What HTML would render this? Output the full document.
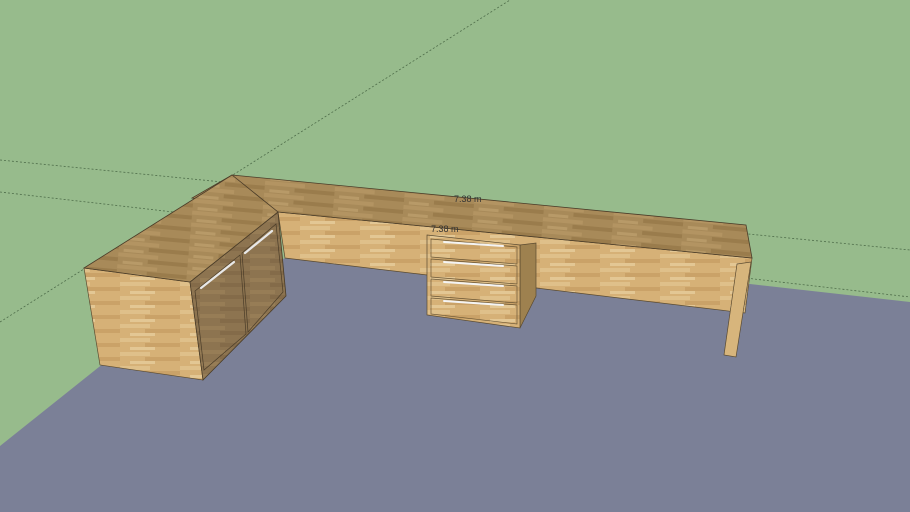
<!DOCTYPE html>
<html><head><style>
html,body{margin:0;padding:0;width:910px;height:512px;overflow:hidden;background:#97bb8c}
svg{display:block}
</style></head><body>
<svg width="910" height="512" viewBox="0 0 910 512" xmlns="http://www.w3.org/2000/svg">
<defs>
<pattern id="wl" width="60" height="14" patternUnits="userSpaceOnUse">
<rect width="60" height="14" fill="#d6b177"/>
<rect x="0" y="2" width="30" height="4" fill="#dfc08a"/>
<rect x="25" y="7" width="35" height="4" fill="#caa268"/>
<rect x="10" y="11" width="25" height="3" fill="#e3c794"/>
</pattern>
<pattern id="wt" width="70" height="12" patternUnits="userSpaceOnUse" patternTransform="rotate(5)">
<rect width="70" height="12" fill="#a88a59"/>
<rect x="0" y="1" width="40" height="4" fill="#b39462"/>
<rect x="30" y="6" width="40" height="4" fill="#9a7c4c"/>
<rect x="5" y="9" width="20" height="3" fill="#b89a68"/>
</pattern>
<pattern id="wd" width="50" height="12" patternUnits="userSpaceOnUse">
<rect width="50" height="12" fill="#8d7450"/>
<rect x="0" y="2" width="25" height="4" fill="#977d56"/>
<rect x="20" y="7" width="30" height="4" fill="#846b49"/>
</pattern>
</defs>
<polygon points="0,446 104,363 285,258 750,284 910,302 910,512 0,512" fill="#7b8097"/>
<g stroke="#3d5a3a" stroke-width="0.8" stroke-dasharray="2,2" fill="none" opacity="0.8">
<line x1="0" y1="160" x2="910" y2="250"/>
<line x1="0" y1="192" x2="910" y2="297"/>
<line x1="0" y1="322" x2="510" y2="0"/>
</g>
<polygon points="278,212 752,258 745,313 285,258" fill="url(#wl)" stroke="#5a4a30" stroke-width="0.7"/>
<polygon points="737,264 751,262 736,357 724,355" fill="#d7b57c" stroke="#5a4a30" stroke-width="0.7"/>
<polygon points="232,175 746,225 752,258 278,212 192,198" fill="url(#wt)" stroke="#4a3c28" stroke-width="0.8"/>
<line x1="192" y1="200" x2="278" y2="214" stroke="#4a3c28" stroke-width="0.8"/>
<polygon points="520,245 536,243 536,296 520,328" fill="#9e814f" stroke="#5a4a30" stroke-width="0.7"/>
<polygon points="427,235 520,245 520,328 427,315" fill="url(#wl)" stroke="#5a4a30" stroke-width="0.7"/>
<g fill="none" stroke="#6a5635" stroke-width="0.7">
<polygon points="431,239 517,247 517,264 431,257"/>
<polygon points="431,259 517,266 517,284 431,277"/>
<polygon points="431,279 517,286 517,303 431,296"/>
<polygon points="431,298 517,305 517,324 431,314"/>
</g>
<g stroke="#f4f4f4" stroke-width="2" stroke-linecap="round">
<line x1="444" y1="242" x2="503" y2="246"/>
<line x1="444" y1="262" x2="503" y2="266"/>
<line x1="444" y1="282" x2="503" y2="286"/>
<line x1="444" y1="301" x2="503" y2="305"/>
</g>
<polygon points="84,268 190,282 203,380 100,365" fill="url(#wl)" stroke="#5a4a30" stroke-width="0.7"/>
<polygon points="190,282 278,212 286,296 203,380" fill="url(#wd)" stroke="#4a3c28" stroke-width="0.8"/>
<g fill="none" stroke="#4a3c28" stroke-width="0.7">
<polygon points="195,291 240,255 246,334 204,370"/>
<polygon points="242,253 276,224 283,292 248,332"/>
</g>
<g stroke="#e8e8e8" stroke-width="2.2" stroke-linecap="round">
<line x1="201" y1="288" x2="234" y2="262"/>
<line x1="245" y1="253" x2="272" y2="231"/>
</g>
<polygon points="84,268 232,175 278,212 190,282" fill="url(#wt)" stroke="#4a3c28" stroke-width="0.8"/>
<g font-family="Liberation Sans, sans-serif" font-size="9" fill="#333">
<text x="454" y="202">7.38 m</text>
<text x="431" y="232">7.38 m</text>
</g>
</svg>
</body></html>
